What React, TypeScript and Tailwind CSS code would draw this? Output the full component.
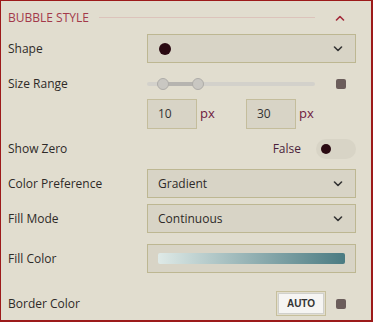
import React from "react";

const Chevron = ({ up = false, color = "#333" }: { up?: boolean; color?: string }) => (
  <svg width="10" height="6" viewBox="0 0 10 6" className="shrink-0">
    <path
      d={up ? "M1.5 5 L5 1.5 L8.5 5" : "M1.5 1 L5 4.5 L8.5 1"}
      fill="none"
      stroke={color}
      strokeWidth="1.6"
      strokeLinecap="round"
      strokeLinejoin="round"
    />
  </svg>
);

const Label = ({ children }: { children: React.ReactNode }) => (
  <div className="w-[139px] shrink-0 text-[12px] text-[#2e2a28]">{children}</div>
);

const Select = ({ children }: { children: React.ReactNode }) => (
  <div className="flex h-[29px] w-[209px] items-center justify-between border border-[#bdb792] bg-[#d8d4c6] pl-[10px] pr-[12px] text-[12px] text-[#2e2a28]">
    <div className="flex items-center">{children}</div>
    <Chevron />
  </div>
);

const Square = () => <div className="h-[10px] w-[10px] rounded-[2px] bg-[#6b5d5b]" />;

export default function App() {
  return (
    <div
      className="box-border h-[322px] w-[373px] border-t border-l border-r-2 border-b-2 border-[#9c1a1a] bg-[#e1ddcf] pl-[7px] pr-[15px]"
      style={{ fontFamily: '"Open Sans", "Segoe UI", sans-serif' }}
    >
      {/* Header */}
      <div className="flex h-[33px] items-center">
        <div className="text-[12px] text-[#a3384a]">BUBBLE STYLE</div>
        <div className="ml-[10px] mr-[20px] h-px flex-1 bg-[#dcc3bb]" />
        <div className="mr-[11px]">
          <Chevron up color="#a32a3a" />
        </div>
      </div>

      {/* Shape */}
      <div className="flex h-[29px] items-center">
        <Label>Shape</Label>
        <Select>
          <div className="ml-[1px] h-[12px] w-[12px] rounded-full bg-[#2a0a12]" />
        </Select>
      </div>

      {/* Size range */}
      <div className="mt-[6px] flex h-[30px] items-center">
        <Label>Size Range</Label>
        <div className="relative h-[14px] w-[168px]">
          <div className="absolute left-0 right-0 top-[5px] h-[4px] rounded-full bg-[#d3d1cb]" />
          <div className="absolute left-[16px] top-[5px] h-[4px] w-[35px] bg-[#b6b4b0]" />
          <div className="absolute left-[10px] top-[1px] h-[12px] w-[12px] rounded-full border-[1.5px] border-[#aeaca8] bg-[#c9c7c2]" />
          <div className="absolute left-[45px] top-[1px] h-[12px] w-[12px] rounded-full border-[1.5px] border-[#aeaca8] bg-[#c9c7c2]" />
        </div>
        <div className="ml-[21px]">
          <Square />
        </div>
      </div>

      {/* inputs */}
      <div className="flex h-[30px] items-center">
        <div className="w-[139px] shrink-0" />
        <div className="flex h-[30px] w-[50px] items-center border border-[#c4bd9c] bg-[#d8d4c6] pl-[10px] text-[12px] text-[#333]">
          10
        </div>
        <div className="ml-[3px] w-[46px] text-[13px] text-[#6e1a40]">px</div>
        <div className="flex h-[30px] w-[50px] items-center border border-[#c4bd9c] bg-[#d8d4c6] pl-[10px] text-[12px] text-[#333]">
          30
        </div>
        <div className="ml-[3px] text-[13px] text-[#6e1a40]">px</div>
      </div>

      {/* Show Zero */}
      <div className="mt-[5px] flex h-[30px] items-center">
        <Label>Show Zero</Label>
        <div className="flex flex-1 items-center justify-end">
          <div className="mr-[15px] text-[12px] text-[#4a1f3c]">False</div>
          <div className="flex h-[20px] w-[40px] items-center rounded-full bg-[#d8d4c6] pl-[5px]">
            <div className="h-[10px] w-[10px] rounded-full bg-[#2a0a12]" />
          </div>
        </div>
      </div>

      {/* Color preference */}
      <div className="mt-[5px] flex h-[29px] items-center">
        <Label>Color Preference</Label>
        <Select>Gradient</Select>
      </div>

      {/* Fill mode */}
      <div className="mt-[6px] flex h-[29px] items-center">
        <Label>Fill Mode</Label>
        <Select>Continuous</Select>
      </div>

      {/* Fill color */}
      <div className="mt-[11px] flex h-[29px] items-center">
        <Label>Fill Color</Label>
        <div className="flex h-[29px] w-[209px] items-center border border-[#bdb792] bg-[#d8d4c6] px-[10px]">
          <div className="h-[11px] flex-1 rounded-[2px] bg-gradient-to-r from-[#dfeae7] to-[#4a7b82]" />
        </div>
      </div>

      {/* Border color */}
      <div className="mt-[18px] flex h-[25px] items-center">
        <Label>Border Color</Label>
        <div className="flex flex-1 items-center justify-end pr-[10px]">
          <div className="mr-[10px] flex h-[25px] w-[50px] items-center justify-center border border-[#c6bf9c] p-[1px]">
            <div className="flex h-full w-full items-center justify-center border border-[#d0d0cc] bg-[#f6f5f3] text-[10px] font-bold text-[#333]" style={{ fontFamily: '"Liberation Sans", Arial, sans-serif' }}>
              AUTO
            </div>
          </div>
          <Square />
        </div>
      </div>
    </div>
  );
}
